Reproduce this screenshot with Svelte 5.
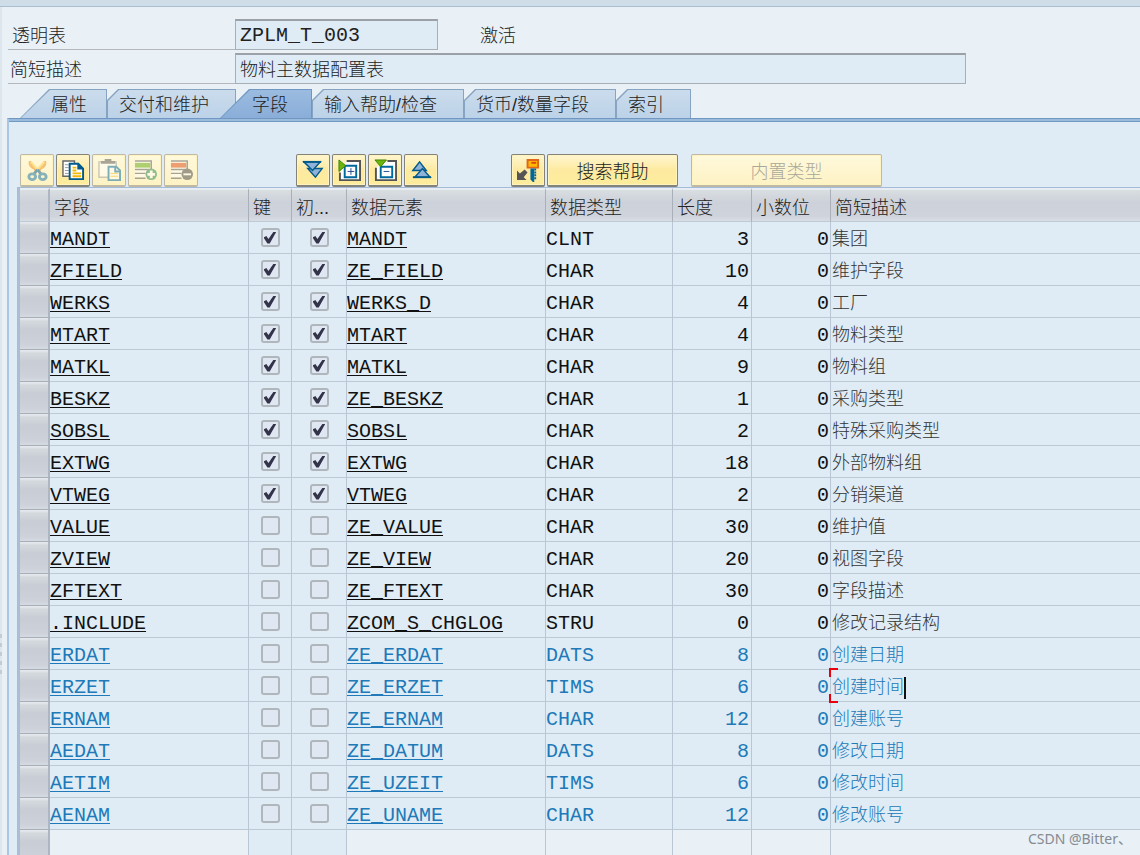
<script lang="ts">
  type Field = {
    name: string;
    key: boolean;
    element: string;
    type: string;
    length: number;
    decimals: number;
    text: string;
    included?: boolean;
  };

  let tableName = $state('ZPLM_T_003');
  let tableText = $state('物料主数据配置表');
  let activeTab = $state('字段');

  const tabs = ['属性', '交付和维护', '字段', '输入帮助/检查', '货币/数量字段', '索引'];

  const f = (name: string, key: boolean, element: string, type: string, length: number, text: string, included = false): Field =>
    ({ name, key, element, type, length, decimals: 0, text, included });

  let fields = $state([
    f('MANDT', true, 'MANDT', 'CLNT', 3, '集团'),
    f('ZFIELD', true, 'ZE_FIELD', 'CHAR', 10, '维护字段'),
    f('WERKS', true, 'WERKS_D', 'CHAR', 4, '工厂'),
    f('MTART', true, 'MTART', 'CHAR', 4, '物料类型'),
    f('MATKL', true, 'MATKL', 'CHAR', 9, '物料组'),
    f('BESKZ', true, 'ZE_BESKZ', 'CHAR', 1, '采购类型'),
    f('SOBSL', true, 'SOBSL', 'CHAR', 2, '特殊采购类型'),
    f('EXTWG', true, 'EXTWG', 'CHAR', 18, '外部物料组'),
    f('VTWEG', true, 'VTWEG', 'CHAR', 2, '分销渠道'),
    f('VALUE', false, 'ZE_VALUE', 'CHAR', 30, '维护值'),
    f('ZVIEW', false, 'ZE_VIEW', 'CHAR', 20, '视图字段'),
    f('ZFTEXT', false, 'ZE_FTEXT', 'CHAR', 30, '字段描述'),
    f('.INCLUDE', false, 'ZCOM_S_CHGLOG', 'STRU', 0, '修改记录结构'),
    f('ERDAT', false, 'ZE_ERDAT', 'DATS', 8, '创建日期', true),
    f('ERZET', false, 'ZE_ERZET', 'TIMS', 6, '创建时间', true),
    f('ERNAM', false, 'ZE_ERNAM', 'CHAR', 12, '创建账号', true),
    f('AEDAT', false, 'ZE_DATUM', 'DATS', 8, '修改日期', true),
    f('AETIM', false, 'ZE_UZEIT', 'TIMS', 6, '修改时间', true),
    f('AENAM', false, 'ZE_UNAME', 'CHAR', 12, '修改账号', true)
  ]);

  let cursorRow = $state(14);
</script>

<div class="screen">
  <div class="topbar"></div>
  <div class="splitter"><i></i><i></i><i></i><i></i><i></i></div>

  <div class="head">
    <div class="line">
      <label class="indent" for="tabname">透明表</label>
      <input id="tabname" class="name" type="text" bind:value={tableName} />
      <span class="status">激活</span>
    </div>
    <div class="line">
      <label for="tabtext">简短描述</label>
      <input id="tabtext" class="text" type="text" bind:value={tableText} />
    </div>
  </div>

  <div class="tabs" role="tablist">
    {#each tabs as tab, i}
      <button
        type="button"
        role="tab"
        class="tab"
        class:first={i === 0}
        class:active={activeTab === tab}
        aria-selected={activeTab === tab}
        onclick={() => (activeTab = tab)}>{tab}</button>
    {/each}
  </div>

  <div class="panel">
    <div class="toolbar">
      <div class="group">
        <button type="button" class="btn" disabled aria-label="剪切">
          <svg viewBox="0 0 24 24">
            <path d="M3 2l2 0 7 8 7-8 2 0c1 4-1 7-5 9l-2 3-2-1-2 1-2-3C4 9 2 6 3 2z" fill="#f08c1a" />
            <path d="M5 3l7 8 7-8" fill="none" stroke="#ffd23c" stroke-width="2" />
            <path d="M12 11l-4 5M12 11l4 5" stroke="#00588c" stroke-width="3" />
            <ellipse cx="6.500" cy="18.500" rx="3.500" ry="3" fill="none" stroke="#1470a8" stroke-width="3" />
            <ellipse cx="17.500" cy="18.500" rx="3.500" ry="3" fill="none" stroke="#1470a8" stroke-width="3" />
          </svg>
        </button>
        <button type="button" class="btn" aria-label="复制">
          <svg viewBox="0 0 24 24">
            <path d="M1 2h12v16H1z" fill="#fff" stroke="#666" stroke-width="1.500" />
            <path d="M3 6h4M3 9h4M3 12h4M3 15h4" stroke="#999" />
            <path d="M8 5h9l5 5v11H8z" fill="#fff" stroke="#005a8c" stroke-width="2" />
            <path d="M16 4v7h7z" fill="#005a8c" />
            <path d="M11 9h4M11 12h4M11 15h9M11 18h9" stroke="#f5b800" stroke-width="2" />
          </svg>
        </button>
        <button type="button" class="btn" disabled aria-label="粘贴">
          <svg viewBox="0 0 24 24">
            <path d="M1 3h18v16H1z" fill="#fff" stroke="#999" stroke-width="1.500" />
            <path d="M3 5V2h4V0h7v2h4v3z" fill="#555" />
            <path d="M11 8h8l4 4v10H11z" fill="#fff" stroke="#00689c" stroke-width="2" />
            <path d="M18 8v5h5" fill="none" stroke="#00689c" stroke-width="2" />
            <path d="M13 15h8M13 18h8" stroke="#f5b800" />
          </svg>
        </button>
        <button type="button" class="btn" disabled aria-label="插入行">
          <svg viewBox="0 0 24 24">
            <path d="M1 1h16v18H1z" fill="#fff" />
            <path d="M1 4h16v5H1z" fill="#60a80c" />
            <path d="M1 2h17v9M1 11h17M1 15h11M1 20h11" fill="none" stroke="#555" stroke-width="1.500" />
            <circle cx="18" cy="16" r="6" fill="#26864a" />
            <path d="M18 12v8M14 16h8" stroke="#fff" stroke-width="3" />
          </svg>
        </button>
        <button type="button" class="btn" disabled aria-label="删除行">
          <svg viewBox="0 0 24 24">
            <path d="M1 1h16v18H1z" fill="#fff" />
            <path d="M1 4h16v5H1z" fill="#dc4a10" />
            <path d="M1 2h17v9M1 11h17M1 15h11M1 20h11" fill="none" stroke="#555" stroke-width="1.500" />
            <circle cx="18" cy="16" r="6" fill="#444" />
            <path d="M14 16h8" stroke="#fff" stroke-width="2" />
          </svg>
        </button>
      </div>

      <div class="group expand">
        <button type="button" class="btn" aria-label="全部展开">
          <svg viewBox="0 0 24 24">
            <path d="M6 10h15l-7 9z" fill="#8fb2d9" stroke="#005a8c" stroke-width="1.500" />
            <path d="M2 3h17l-8 9z" fill="#8fb2d9" stroke="#005a8c" stroke-width="1.500" />
            <path d="M1 3h19" stroke="#005a8c" stroke-width="2" />
          </svg>
        </button>
        <button type="button" class="btn" aria-label="展开">
          <svg viewBox="0 0 24 24">
            <path d="M9 2h14v20H2v-8" fill="#fff" stroke="#555" stroke-width="2" />
            <path d="M7 7h12v12H7z" fill="#fff" stroke="#00689c" stroke-width="2" />
            <path d="M10 13h7M13.500 9.500v7" stroke="#244a94" />
            <path d="M1 1l7 6-7 6z" fill="#6db40c" stroke="#3b8508" />
          </svg>
        </button>
        <button type="button" class="btn" aria-label="折叠">
          <svg viewBox="0 0 24 24">
            <path d="M14 2h9v20H2V9" fill="#fff" stroke="#555" stroke-width="2" />
            <path d="M7 8h12v11H7z" fill="#fff" stroke="#00689c" stroke-width="2" />
            <path d="M10 13h6" stroke="#244a94" />
            <path d="M1 1h12L7 8z" fill="#6db40c" stroke="#3b8508" />
          </svg>
        </button>
        <button type="button" class="btn" aria-label="全部折叠">
          <svg viewBox="0 0 24 24">
            <path d="M3 12l7-9 7 9z" fill="#8fb2d9" stroke="#005a8c" stroke-width="1.500" />
            <path d="M5 19l8-9 8 9z" fill="#8fb2d9" stroke="#005a8c" stroke-width="1.500" />
            <path d="M3 19h19" stroke="#005a8c" stroke-width="2" />
          </svg>
        </button>
      </div>

      <div class="group">
        <button type="button" class="btn" aria-label="外键">
          <svg viewBox="0 0 24 24">
            <path d="M11 1h11v8H11z" fill="#ffb800" stroke="#e0661a" stroke-width="2" />
            <path d="M15 4h5" stroke="#dc4a10" stroke-width="2" />
            <path d="M15 10v11l2 2v-13" fill="#8fc8e8" stroke="#00689c" stroke-width="2" />
            <path d="M19 10v12" stroke="#00689c" stroke-width="2" stroke-dasharray="2 1" />
            <path d="M0 12l3 3 5-4 3 3-4 5 3 3H0z" fill="#555" />
          </svg>
        </button>
        <button type="button" class="btn search">搜索帮助</button>
      </div>
      <button type="button" class="btn builtin" disabled>内置类型</button>
    </div>

    <table>
      <colgroup>
        <col class="c-sel" /><col class="c-name" /><col class="c-key" /><col class="c-init" /><col class="c-elem" />
        <col class="c-type" /><col class="c-len" /><col class="c-dec" /><col />
      </colgroup>
      <thead>
        <tr>
          <th class="sel" aria-label="选择"></th>
          <th>字段</th>
          <th>键</th>
          <th>初<b>...</b></th>
          <th>数据元素</th>
          <th>数据类型</th>
          <th>长度</th>
          <th>小数位</th>
          <th>简短描述</th>
        </tr>
      </thead>
      <tbody>
        {#each fields as field, i}
          <tr class:included={field.included}>
            <td class="sel"></td>
            <td><a href="#{field.name}">{field.name}</a></td>
            <td class="check"><input type="checkbox" aria-label="{field.name} 键" bind:checked={field.key} /></td>
            <td class="check"><input type="checkbox" aria-label="{field.name} 初始值" checked={field.key} /></td>
            <td><a href="#{field.element}">{field.element}</a></td>
            <td>{field.type}</td>
            <td class="num">{field.length}</td>
            <td class="num dec">{field.decimals}</td>
            <td class="desc" class:cursor={i === cursorRow} onclick={() => (cursorRow = i)}>{field.text}</td>
          </tr>
        {/each}
        <tr class="empty">
          <td class="sel"></td><td></td><td class="check"></td><td class="check"></td><td></td><td></td><td></td><td></td><td></td>
        </tr>
      </tbody>
    </table>
  </div>

  <div class="watermark">CSDN @Bitter、</div>
</div>

<style>
  :global(body) {
    margin: 0;
  }
  .screen {
    position: relative;
    box-sizing: border-box;
    height: 100vh;
    overflow: hidden;
    display: flex;
    flex-direction: column;
    padding-left: 8px;
    background: linear-gradient(90deg, #dde5ed 2px, #e9f0f6 2px);
    color: #222;
    font-family: "Liberation Sans", "Noto Sans CJK SC", sans-serif;
    font-size: 18px;
    font-weight: 300;
  }
  input, button {
    font-family: inherit;
    font-weight: inherit;
    color: inherit;
  }
  .topbar {
    flex: none;
    height: 6px;
    margin-left: -8px;
    background: #cfdde8;
    border-bottom: 1px solid #a9bfd0;
  }
  .splitter {
    position: absolute;
    left: 0;
    top: 634px;
    display: flex;
    flex-direction: column;
    gap: 5px;
  }
  .splitter i {
    width: 2px;
    height: 4px;
    background: #c4cbd2;
  }

  .head {
    display: flex;
    flex-direction: column;
    gap: 3px;
    padding-top: 12px;
  }
  .line {
    display: flex;
    height: 31px;
    line-height: 26px;
  }
  .line label {
    box-sizing: border-box;
    width: 227px;
    padding: 4px 0 0 2px;
    border-bottom: 1px solid #b4b8bc;
  }
  .line label.indent {
    padding-left: 4px;
  }
  .line input {
    box-sizing: border-box;
    padding: 0 4px;
    border: 1px solid #a8b0b6;
    border-top: 2px solid #9ba1a6;
    border-radius: 0;
    background: #dfecf5;
    font-size: 18px;
    outline: none;
  }
  .line input.name {
    width: 203px;
    font-family: "Liberation Mono", monospace;
    font-size: 20px;
  }
  .line input.text {
    flex: 0 1 731px;
    padding-bottom: 2px;
  }
  .status {
    padding-top: 4px;
    margin-left: 42px;
  }

  .tabs {
    display: flex;
    height: 29px;
    padding: 5px 0 0 12px;
  }
  .tab {
    position: relative;
    isolation: isolate;
    box-sizing: border-box;
    height: 29px;
    padding: 3px 27px 0 12px;
    border: none;
    background: #86a3c2;
    clip-path: polygon(0 11px, 11px 0, 100% 0, 100% 100%, 0 100%);
    font-size: 18px;
    line-height: 26px;
    white-space: nowrap;
    cursor: pointer;
  }
  .tab::before {
    content: "";
    position: absolute;
    z-index: -1;
    inset: 1px 1px 0 1px;
    background: linear-gradient(#cbdcec, #bcd2e8);
    clip-path: polygon(0 11px, 11px 0, 100% 0, 100% 100%, 0 100%);
  }
  .tab.first,
  .tab.active {
    padding: 3px 20px 0 31px;
    clip-path: polygon(0 100%, 29px 0, 100% 0, 100% 100%);
  }
  .tab.active {
    z-index: 1;
    margin-left: -16px;
    padding: 3px 24px 0 32px;
    background: #6f97c4;
  }
  .tab.first::before,
  .tab.active::before {
    clip-path: polygon(0 100%, 29px 0, 100% 0, 100% 100%);
  }
  .tab.active::before {
    background: linear-gradient(#9bbbe0, #8aaed9);
  }

  .panel {
    flex: 1;
    margin-left: -1px;
    padding: 35px 0 0 8px;
    border-left: 2px solid #a9c7e3;
    border-top: 1px solid #6f97c2;
    background: linear-gradient(#9bbbdc 2px, #7299c2 2px, #7299c2 3px, #dfecf5 3px);
  }

  .toolbar {
    display: flex;
    margin-left: 3px;
  }
  .group {
    display: flex;
    gap: 2px;
    margin-right: 13px;
  }
  .group:first-child {
    margin-right: 98px;
  }
  .group.expand {
    margin-right: 73px;
  }
  .btn {
    display: flex;
    align-items: center;
    justify-content: center;
    box-sizing: border-box;
    width: 34px;
    height: 33px;
    padding: 0;
    border: 1px solid #85827a;
    border-bottom-width: 2px;
    border-radius: 2px;
    background: linear-gradient(#fff6d0, #fdeaa0 50%, #fdec9c);
    box-shadow: inset 0 0 0 1px #fff3c0;
    font-size: 18px;
  }
  .btn svg {
    width: 23px;
    height: 23px;
  }
  .btn:disabled {
    border-color: #bdb9a6;
    background: linear-gradient(#fff9dc, #fdf2c4);
    color: #aaa898;
  }
  .btn:disabled svg {
    opacity: 0.5;
  }
  .btn.search {
    width: 131px;
  }
  .btn.builtin {
    width: 191px;
  }

  table {
    width: 100%;
    border-collapse: separate;
    border-spacing: 0;
    table-layout: fixed;
    border-left: 3px solid #a9bdd6;
    border-top: 1px solid #a4bbd8;
  }
  .c-sel { width: 30px; }
  .c-name { width: 199px; }
  .c-key { width: 43px; }
  .c-init { width: 55px; }
  .c-elem { width: 199px; }
  .c-type { width: 127px; }
  .c-len, .c-dec { width: 79px; }
  th, td {
    box-sizing: border-box;
    height: 32px;
    padding: 4px 0 0;
    overflow: hidden;
    border-right: 1px solid #b9c7d4;
    border-bottom: 1px solid #bccad6;
    line-height: 26px;
    white-space: nowrap;
    text-align: left;
  }
  th:last-child, td:last-child {
    border-right: none;
  }
  th {
    height: 34px;
    padding-left: 4px;
    border-top: 2px solid #e8edf3;
    border-right-color: #a9b0ba;
    background: linear-gradient(#d9dee1, #cdd1d9 40%, #cfd3dc 85%, #dadfe4);
    font-weight: 300;
  }
  td {
    background: #dfecf5;
    color: #111;
    font-family: "Liberation Mono", "Noto Sans CJK SC", monospace;
    font-size: 20px;
  }
  td.sel, th.sel {
    border-right: 2px solid #adb6c2;
  }
  td.sel {
    border-bottom-color: #a6aeb8;
    background: linear-gradient(#e4e8ec 1px, #d4d9de 3px, #c8cdd5 12px, #ccd1da 85%, #d6dbe2);
  }
  a {
    color: inherit;
    text-decoration: underline;
    text-decoration-thickness: 1px;
    text-decoration-skip-ink: none;
    text-underline-offset: 2px;
  }
  td.num {
    text-align: right;
    padding-right: 2px;
  }
  td.dec {
    padding-right: 1px;
  }
  td.desc {
    padding-left: 1px;
    font-size: 18px;
    color: #333;
  }
  .included td, .included td.desc {
    color: #2079b8;
  }
  td.check {
    text-align: center;
    line-height: 0;
    padding: 0;
  }
  .check input {
    appearance: none;
    display: inline-grid;
    place-items: center;
    box-sizing: border-box;
    width: 19px;
    height: 19px;
    margin: 0;
    border: 2px solid #b0b6bc;
    border-radius: 3px;
    background: #dfe8f2;
    vertical-align: middle;
  }
  .check input:checked::before {
    content: "";
    width: 13px;
    height: 12px;
    background: #33334a;
    clip-path: polygon(0 50%, 22% 38%, 38% 62%, 78% 0, 100% 0, 48% 100%, 30% 100%);
  }
  .empty td:not(.sel):not(.check) {
    background: #e9f0f6;
  }

  td.cursor {
    position: relative;
    overflow: visible;
  }
  td.cursor::before {
    content: "";
    position: absolute;
    left: -2px;
    top: -2px;
    width: 9px;
    height: 35px;
    background:
      linear-gradient(#e8000c, #e8000c) 0 0 / 9px 2px no-repeat,
      linear-gradient(#e8000c, #e8000c) 0 100% / 9px 2px no-repeat,
      linear-gradient(#e8000c, #e8000c) 0 0 / 2px 9px no-repeat,
      linear-gradient(#e8000c, #e8000c) 0 100% / 2px 9px no-repeat;
  }
  td.cursor::after {
    content: "";
    display: inline-block;
    width: 2px;
    height: 22px;
    background: #111;
    vertical-align: middle;
  }

  .watermark {
    position: absolute;
    right: 8px;
    bottom: 6px;
    color: #858b91;
    font-family: "Noto Sans", "Noto Sans CJK SC", sans-serif;
    font-size: 14px;
    font-weight: 400;
    line-height: 20px;
  }
</style>
